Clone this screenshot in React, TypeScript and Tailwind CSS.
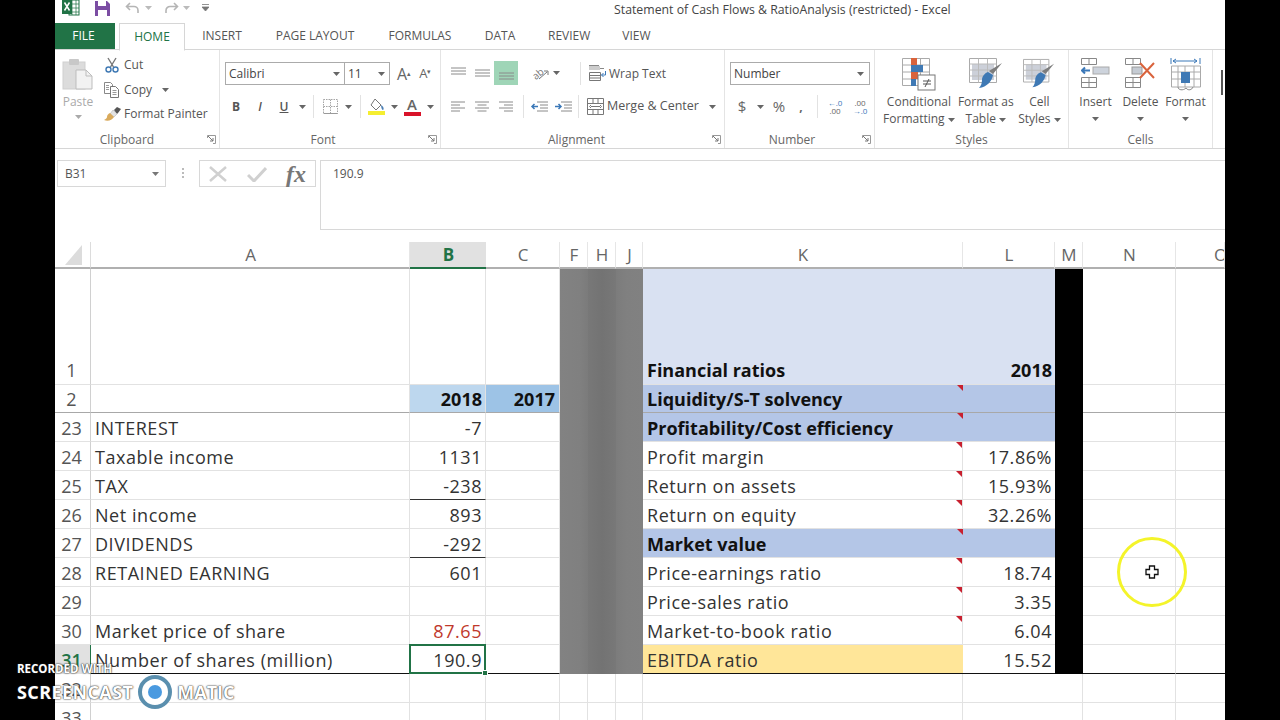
import React from "react";

const Caret = ({ c = "#666", className = "" }: { c?: string; className?: string }) => (
  <svg width="7" height="4" viewBox="0 0 7 4" className={className}><path d="M0 0h7L3.5 4z" fill={c} /></svg>
);

const Launcher = () => (
  <svg width="9" height="9" viewBox="0 0 9 9"><path d="M.5 3V.5H8.5V8.500H6" fill="none" stroke="#999" /><path d="M1 1l5 5M3 6h3V3" fill="none" stroke="#777" /></svg>
);

const Group = ({ w, label, launcher, labelCls = "", children }: { w: string; label: string; launcher?: boolean; labelCls?: string; children: React.ReactNode }) => (
  <div className={`${w} flex h-full shrink-0 flex-col border-r border-[#e4e4e4]`}>
    <div className="h-[81px] overflow-hidden">{children}</div>
    <div className="flex h-[17px] items-center">
      <span className={`flex-1 text-center text-[12px] text-[#666] ${labelCls}`}>{label}</span>
      {launcher && <span className="mr-[3px] flex"><Launcher /></span>}
    </div>
  </div>
);

const Slot = ({ w = "w-[24px]", children, className = "" }: { w?: string; children?: React.ReactNode; className?: string }) => (
  <span className={`${w} flex shrink-0 items-center justify-center ${className}`}>{children}</span>
);

const Sep = ({ ml = "" }: { ml?: string }) => <span className={`h-[23px] w-px shrink-0 bg-[#e2e2e2] ${ml}`} />;

const AlignV = ({ y }: { y: number }) => (
  <svg width="15" height="15" viewBox="0 0 15 15"><path d={`M0 ${y}h15M0 ${y + 3}h15M0 ${y + 6}h15`} stroke="#8a8a8a" strokeWidth="1" fill="none" /></svg>
);

const AlignH = ({ k }: { k: "l" | "c" | "r" }) => {
  const s = k === "l" ? ["M1 2h14", "M1 5h9", "M1 8h14", "M1 11h9"] : k === "c" ? ["M1 2h14", "M3.500 5h9", "M1 8h14", "M3.500 11h9"] : ["M1 2h14", "M6 5h9", "M1 8h14", "M6 11h9"];
  return <svg width="16" height="13" viewBox="0 0 16 13"><path d={s.join("")} stroke="#8a8a8a" fill="none" /></svg>;
};

const Indent = ({ flip }: { flip?: boolean }) => (
  <svg width="18" height="13" viewBox="0 0 18 13">
    <path d="M7 2h11M10 5h8M10 8h8M7 11h11" stroke="#8a8a8a" fill="none" />
    {flip ? <path d="M1 6.500h6M4.500 4l2.500 2.500L4.500 9" stroke="#3b78b8" strokeWidth="1.500" fill="none" /> : <path d="M8 6.500H2M4.500 4L2 6.500 4.500 9" stroke="#3b78b8" strokeWidth="1.500" fill="none" />}
  </svg>
);

const PasteIcon = () => (
  <svg width="32" height="32" viewBox="0 0 32 32">
    <rect x="1" y="4" width="22" height="27" fill="#dcdcdc" stroke="#cfcfcf" />
    <rect x="7" y="1" width="10" height="6" rx="1" fill="#c8c8c8" />
    <path d="M14 12h10l6 6v13H14z" fill="#f2f2f2" stroke="#bdbdbd" />
    <path d="M24 12v6h6" fill="none" stroke="#bdbdbd" />
  </svg>
);

const CutIcon = () => (
  <svg width="16" height="16" viewBox="0 0 16 16">
    <path d="M4 1l5.500 9M12 1L6.500 10" stroke="#777" strokeWidth="1.400" fill="none" />
    <circle cx="4.500" cy="12.500" r="2.500" fill="none" stroke="#3f79b4" strokeWidth="1.400" />
    <circle cx="11.500" cy="12.500" r="2.500" fill="none" stroke="#3f79b4" strokeWidth="1.400" />
  </svg>
);

const CopyIcon = () => (
  <svg width="16" height="16" viewBox="0 0 16 16">
    <path d="M.5.500h6l2 2v9h-8z" fill="#fff" stroke="#888" />
    <path d="M6.500 4.500h5l3 3v8h-8z" fill="#fff" stroke="#777" />
    <path d="M8.500 8.500h4M8.500 10.500h4M8.500 12.500h4M2 3.500h3M2 5.500h3M2 7.500h3" stroke="#999" fill="none" />
  </svg>
);

const BrushIcon = () => (
  <svg width="17" height="15" viewBox="0 0 17 15">
    <path d="M10 3l3-3 4 2-3 4-1 1z" fill="#555" />
    <path d="M9 3l4 4-3 3-4-3z" fill="#e3e3e3" stroke="#aaa" strokeWidth=".5" />
    <path d="M6 6l4 4c-2 3-6 5-10 3 2-1 3-2 3-3 0-2 1-3 3-4z" fill="#d9aa5c" />
  </svg>
);

const BorderIcon = () => (
  <svg width="15" height="15" viewBox="0 0 15 15">
    <path d="M.5.500h14v14H.500zM7.500.500v14M.500 7.500h14" fill="none" stroke="#a5a5a5" strokeDasharray="1.500 1" />
    <path d="M.5 14.500h14" stroke="#9a9a9a" />
  </svg>
);

const FillIcon = () => (
  <svg width="18" height="18" viewBox="0 0 18 18">
    <path d="M7 1l6 6-5 5-5-5z" fill="#fff" stroke="#777" />
    <path d="M13 7c2 1 3 3 2.500 4.500S13 11 13 7z" fill="#4b7fb5" />
    <rect x="0" y="13" width="17" height="4" fill="#f5ee30" />
  </svg>
);

const ColorA = () => (
  <span className="flex flex-col items-center leading-none">
    <span className="text-[15px] font-semibold leading-[14px] text-[#666]">A</span>
    <span className="mt-[1px] h-[4px] w-[17px] bg-[#d9132a]" />
  </span>
);

const OrientIcon = () => (
  <svg width="18" height="15" viewBox="0 0 18 15">
    <text x="1" y="12" fontSize="10" fill="#777" transform="rotate(-40 6 8)" fontFamily="Open Sans">ab</text>
    <path d="M8 13l8-7" stroke="#777" fill="none" />
    <path d="M13 5h4v4" stroke="#777" fill="none" />
  </svg>
);

const WrapIcon = () => (
  <svg width="19" height="17" viewBox="0 0 19 17">
    <path d="M1 .500h10M1 3.500h15" stroke="#888" fill="none" />
    <rect x="1" y="1" width="11" height="4" fill="#ccc" />
    <path d="M1.500 7.500h11v8h-11zM1.500 10.500h11M1.500 13h11" stroke="#777" fill="none" />
    <path d="M17.500 6v4h-4M15.500 8l-2 2 2 2" stroke="#3b78b8" fill="none" />
  </svg>
);

const MergeIcon = () => (
  <svg width="17" height="17" viewBox="0 0 17 17">
    <path d="M.5.500h16v16H.500zM.500 5.500h16M.500 11.500h16M6 .500v5M11 .500v5M6 11.500v5M11 11.500v5" fill="none" stroke="#777" />
    <path d="M4 8.500h9M4 7l-1.500 1.500L4 10M13 7l1.500 1.500L13 10" fill="none" stroke="#777" />
  </svg>
);

const CondIcon = () => (
  <svg width="34" height="33" viewBox="0 0 34 33">
    <path d="M.5.500h27v27H.500zM9.500.500v27M18.500.500v27M.500 7h27M.500 14h27M.500 21h27" fill="none" stroke="#aaa" />
    <rect x="9" y="0" width="6" height="7" fill="#d9633c" />
    <rect x="9" y="7" width="12" height="7" fill="#3f79b4" />
    <rect x="9" y="14" width="7" height="7" fill="#d9633c" />
    <rect x="9" y="21" width="5" height="7" fill="#3f79b4" />
    <rect x="16" y="17" width="17" height="15" fill="#fff" stroke="#777" />
    <path d="M21 23h8M21 26h8M27 21l-4 8" stroke="#555" fill="none" />
  </svg>
);

const TableBrush = ({ w }: { w: number }) => (
  <svg width={w} height="33" viewBox="0 0 34 33">
    <path d="M.5.500h27v24H.500z" fill="#fff" stroke="#aaa" />
    <rect x="3" y="6" width="22" height="16" fill="#ccd0d9" />
    <path d="M.5 6h27M9.500.500v24M18.500.500v24M.500 12h27M.500 18h27" stroke="#bbb" fill="none" />
    <path d="M33 5l-9 11-4-3z" fill="#7d7d7d" />
    <path d="M19 14l5 3c-1 6-6 12-14 13 2-2 3-5 3-8 0-4 3-7 6-8z" fill="#3f79b4" />
  </svg>
);

const InsertIcon = () => (
  <svg width="29" height="30" viewBox="0 0 29 30">
    <path d="M.5.500h15v6H.500zM8 .500v6M.500 19.500h15v10H.500zM.500 24.500h15M8 19.500v10" fill="none" stroke="#888" />
    <rect x="12" y="9" width="16" height="7" fill="#cdd3dc" stroke="#aaa" />
    <path d="M9 12.500H1M4 9.500l-3 3 3 3" fill="none" stroke="#3b78b8" strokeWidth="2" />
  </svg>
);

const DeleteIcon = () => (
  <svg width="32" height="30" viewBox="0 0 32 30">
    <path d="M.5.500h15v6H.500zM8 .500v6M.500 19.500h15v10H.500zM.500 24.500h15M8 19.500v10" fill="none" stroke="#888" />
    <rect x="7" y="9" width="10" height="7" fill="#c5cbd3" stroke="#999" />
    <path d="M15 5l14 15M29 5L15 20" stroke="#d9633c" strokeWidth="2" fill="none" />
  </svg>
);

const FormatIcon = () => (
  <svg width="32" height="34" viewBox="0 0 32 34">
    <path d="M3 3h24M3 3l3-2M3 3l3 2M27 3l-3-2M27 3l-3 2M1 0v6M30 0v6" stroke="#3b78b8" fill="none" />
    <path d="M1.500 8h29v21h-29zM8 8v21M24 8v21M1.500 14h29M1.500 21h29M15 8v21" stroke="#aaa" fill="none" />
    <rect x="11" y="14" width="9" height="11" fill="#3f79b4" />
    <path d="M8 29c0 3 5 4 8 1M16 30c2 3 6 2 7-1" stroke="#888" fill="none" />
  </svg>
);

const Ribbon = () => (
  <div className="flex h-[99px] border-b border-[#d6d6d6] bg-white text-[12px] text-[#555]">
    <Group w="w-[165px]" label="Clipboard" launcher labelCls="pr-[8px]">
      <div className="flex h-full">
        <div className="ml-[8px] flex w-[30px] flex-col items-center pt-[8px] text-[#aaa]">
          <PasteIcon />
          <span className="mt-[4px] leading-[16px]">Paste</span>
          <Caret c="#aaa" className="mt-[5px]" />
        </div>
        <div className="ml-[11px] flex flex-col">
          <div className="mt-[7px] flex h-[16px] items-center"><span className="flex w-[19px]"><CutIcon /></span><span className="ml-[1px]">Cut</span></div>
          <div className="mt-[9px] flex h-[16px] items-center"><span className="flex w-[19px]"><CopyIcon /></span><span className="ml-[1px]">Copy</span><Caret className="ml-[10px]" /></div>
          <div className="mt-[8px] flex h-[16px] items-center"><span className="flex w-[19px]"><BrushIcon /></span><span className="ml-[1px]">Format Painter</span></div>
        </div>
      </div>
    </Group>
    <Group w="w-[221px]" label="Font" launcher labelCls="pr-[2px]">
      <div className="pt-[12px]">
        <div className="flex h-[23px] items-center pl-[5px]">
          <div className="flex h-[23px] w-[120px] items-center justify-between border border-[#ababab] pl-[3px] pr-[4px] text-[#444]">Calibri<Caret /></div>
          <div className="-ml-px flex h-[23px] w-[46px] items-center justify-between border border-[#ababab] pl-[3px] pr-[4px] text-[#444]">11<Caret /></div>
          <span className="ml-[7px] text-[16px] text-[#666]">A<sup className="text-[7px]">▴</sup></span>
          <span className="ml-[8px] text-[13px] text-[#666]">A<sup className="text-[7px]">▾</sup></span>
        </div>
        <div className="mt-[10px] flex h-[23px] items-center pl-[4px] text-[#555]">
          <Slot className="font-bold">B</Slot>
          <Slot className="italic font-semibold">I</Slot>
          <Slot><span className="font-semibold underline">U</span></Slot>
          <Slot w="w-[12px]"><Caret /></Slot>
          <Slot w="w-[10px]"><Sep /></Slot>
          <Slot><BorderIcon /></Slot>
          <Slot w="w-[12px]"><Caret /></Slot>
          <Slot w="w-[12px]"><Sep /></Slot>
          <Slot w="w-[22px]"><FillIcon /></Slot>
          <Slot w="w-[12px]"><Caret /></Slot>
          <Slot w="w-[24px]"><ColorA /></Slot>
          <Slot w="w-[12px]"><Caret /></Slot>
        </div>
      </div>
    </Group>
    <Group w="w-[284px]" label="Alignment" launcher>
      <div className="pt-[11px]">
        <div className="flex h-[24px] items-center pl-[5px]">
          <Slot><AlignV y={2} /></Slot>
          <Slot><AlignV y={4} /></Slot>
          <Slot className="h-[24px] bg-[#9fd5b7]"><AlignV y={7} /></Slot>
          <Slot className="ml-[10px]"><OrientIcon /></Slot>
          <Caret className="ml-[1px]" />
          <Sep ml="ml-[20px]" />
          <Slot className="ml-[4px]"><WrapIcon /></Slot>
          <span className="mt-[1px]">Wrap Text</span>
        </div>
        <div className="mt-[10px] flex h-[23px] items-center pl-[5px]">
          <Slot><AlignH k="l" /></Slot>
          <Slot><AlignH k="c" /></Slot>
          <Slot><AlignH k="r" /></Slot>
          <Sep ml="ml-[5px]" />
          <Slot className="ml-[3px]"><Indent /></Slot>
          <Slot><Indent flip /></Slot>
          <Sep ml="ml-[3px]" />
          <Slot className="ml-[4px]"><MergeIcon /></Slot>
          <span className="text-[12.500px]">Merge &amp; Center</span>
          <Caret className="ml-[10px]" />
        </div>
      </div>
    </Group>
    <Group w="w-[150px]" label="Number" launcher labelCls="pr-[3px]">
      <div className="pt-[12px]">
        <div className="ml-[5px] flex h-[23px] w-[140px] items-center justify-between border border-[#ababab] pl-[3px] pr-[5px] text-[#444]">Number<Caret /></div>
        <div className="mt-[10px] flex h-[23px] items-center pl-[5px] text-[#666]">
          <Slot className="text-[15px]">$</Slot>
          <Slot w="w-[12px]"><Caret /></Slot>
          <Slot className="ml-[1px] text-[15px]">%</Slot>
          <Slot w="w-[20px]" className="font-bold">,</Slot>
          <Slot w="w-[12px]"><Sep /></Slot>
          <Slot w="w-[24px]" className="flex-col text-[8px] leading-[8px]"><span className="text-[#3b78b8]">←.0</span><span>.00</span></Slot>
          <Slot w="w-[24px]" className="ml-[1px] flex-col text-[8px] leading-[8px]"><span>.00</span><span className="text-[#3b78b8]">→.0</span></Slot>
        </div>
      </div>
    </Group>
    <Group w="w-[194px]" label="Styles">
      <div className="flex pt-[8px] text-center leading-[17px]">
        <div className="flex w-[87px] flex-col items-center pl-[2px]"><CondIcon /><span className="mt-[2px]">Conditional</span><span className="whitespace-nowrap">Formatting <Caret className="inline align-middle" /></span></div>
        <div className="flex w-[50px] flex-col items-center"><TableBrush w={34} /><span className="mt-[2px] whitespace-nowrap">Format as</span><span className="whitespace-nowrap">Table <Caret className="inline align-middle" /></span></div>
        <div className="flex w-[58px] flex-col items-center"><TableBrush w={32} /><span className="mt-[2px]">Cell</span><span className="whitespace-nowrap">Styles <Caret className="inline align-middle" /></span></div>
      </div>
    </Group>
    <Group w="w-[144px]" label="Cells">
      <div className="flex pl-[4px] pt-[8px] text-center leading-[17px]">
        {[["Insert", <InsertIcon />], ["Delete", <DeleteIcon />], ["Format", <FormatIcon />]].map(([t, i], n) => (
          <div key={n} className="flex h-[70px] w-[45px] flex-col items-center">
            <span className="flex h-[34px]">{i}</span>
            <span className="mt-[1px]">{t}</span>
            <Caret className="mt-[7px]" />
          </div>
        ))}
      </div>
    </Group>
    <div className="flex-1 pl-[8px] pt-[20px]"><span className="block h-[25px] w-[2px] bg-[#555]" /></div>
  </div>
);

const COLS = "grid grid-cols-[36px_319px_76px_74px_28px_28px_27px_320px_92px_28px_93px_1fr] grid-rows-[minmax(0,1fr)]";
const GL = "border-r border-b border-[#e2e2e2]";
const GRAY = ["bg-[linear-gradient(90deg,#828282,#808080_70%,#7b7b7b)]", "bg-[linear-gradient(90deg,#787878,#737373_50%,#787878)]", "bg-[linear-gradient(90deg,#7c7c7c,#808080_40%,#818181)]"];

type R = {
  n: string; a?: string; b?: string; c?: string; k?: string; l?: string; h?: string; kb?: boolean;
  kbg?: string; lbg?: string; bCls?: string; cCls?: string; tri?: boolean; sel?: boolean; last?: boolean; band?: boolean; freeze?: boolean; lh?: string;
};

const Row = ({ n, a, b, c, k, l, h = "h-[29px]", kb, kbg = "", lbg, bCls = "", cCls = "", tri, sel, last, band = true, freeze, lh = "leading-[26px]" }: R) => {
  const bot = last ? "border-b-[#111]" : freeze ? "border-b-[#a8a8a8]" : "border-b-[#e2e2e2]";
  const reg = "tracking-[0.55px]";
  return (
    <div className={`${COLS} ${h} text-[18px] ${lh} text-[#333]`}>
      <div className={`flex items-end justify-center border-r border-b pr-[2px] ${sel ? "border-r-[#217346] bg-[#e1e1e1] text-[#217346] font-semibold" : "border-r-[#d0d0d0] text-[#555]"} ${freeze ? "border-b-[#a8a8a8]" : "border-b-[#e2e2e2]"}`}>{n}</div>
      <div className={`${GL} ${bot} ${reg} flex items-end overflow-visible whitespace-nowrap pl-[4px]`}>{a}</div>
      <div className={`${GL} ${bot} ${reg} relative flex items-end justify-end pr-[3px] ${bCls}`}>
        {b}
        {sel && <span className="absolute -bottom-px -left-px -right-px -top-px z-10 border-2 border-[#217346]" />}
        {sel && <span className="absolute -bottom-[3px] -right-[3px] z-20 h-[6px] w-[6px] border border-white bg-[#217346]" />}
      </div>
      <div className={`${GL} ${bot} flex items-end justify-end pr-[4px] ${cCls}`}>{c}</div>
      {GRAY.map((g, i) => <div key={i} className={band ? g : `${GL} border-b-[#e2e2e2]`} />)}
      <div className={`relative border-b ${bot} ${kbg ? "" : "border-r border-r-[#e2e2e2]"} ${kb ? "font-bold text-[#111]" : reg} ${kbg} flex items-end pl-[4px]`}>
        {k}
        {tri && <svg width="6" height="6" viewBox="0 0 6 6" className="absolute right-0 top-0"><path d="M0 0h6v6z" fill="#c8202f" /></svg>}
      </div>
      <div className={`border-b ${bot} ${lbg ?? ""} flex items-end justify-end pr-[3px] ${kb ? "font-bold text-[#111]" : reg}`}>{l}</div>
      <div className={band ? "bg-black" : `${GL} border-b-[#e2e2e2]`} />
      <div className={`${GL} ${bot}`} />
      <div className={`border-b ${bot}`} />
    </div>
  );
};

const Head = ({ t, sel, cls = "" }: { t: string; sel?: boolean; cls?: string }) => (
  <div className={`flex items-center justify-center overflow-hidden border-b-2 pl-[1px] text-[17px] ${sel ? "border-b-[#217346] bg-[#e1e1e1] font-bold text-[#217346]" : "border-r border-r-[#e6e6e6] border-b-[#b0b0b0] text-[#666]"} ${cls}`}>{t}</div>
);

const Sheet = () => (
  <div className="overflow-hidden bg-white">
    <div className={`${COLS} h-[27px]`}>
      <div className="flex items-center justify-center border-r border-b-2 border-r-[#dcdcdc] border-b-[#b0b0b0]">
        <svg width="17" height="20" viewBox="0 0 17 20" className="ml-[2px]"><path d="M17 0v20H0z" fill="#dcdcdc" /></svg>
      </div>
      {["A", "B", "C", "F", "H", "J", "K", "L", "M", "N"].map((t) => <Head key={t} t={t} sel={t === "B"} />)}
      <Head t="O" cls="justify-start !pl-[38px]" />
    </div>
    <Row n="1" h="h-[116px]" lh="leading-[28px]" k="Financial ratios" l="2018" kb kbg="bg-[#d9e1f2]" lbg="bg-[#d9e1f2] border-b-[#d9e1f2]" />
    <Row n="2" h="h-[28px]" b="2018" c="2017" bCls="bg-[#bdd7ee] font-bold text-[#111] !tracking-normal" cCls="bg-[#9dc3e6] font-bold text-[#111]" k="Liquidity/S-T solvency" kb kbg="bg-[#b4c6e7]" lbg="bg-[#b4c6e7]" tri freeze />
    <Row n="23" a="INTEREST" b="-7" k="Profitability/Cost efficiency" kb kbg="bg-[#b4c6e7]" lbg="bg-[#b4c6e7]" tri />
    <Row n="24" a="Taxable income" b="1131" k="Profit margin" l="17.86%" tri />
    <Row n="25" a="TAX" b="-238" k="Return on assets" l="15.93%" tri bCls="!border-b-[#333]" />
    <Row n="26" a="Net income" b="893" k="Return on equity" l="32.26%" tri />
    <Row n="27" a="DIVIDENDS" b="-292" k="Market value" kb kbg="bg-[#b4c6e7]" lbg="bg-[#b4c6e7]" tri bCls="!border-b-[#333]" />
    <Row n="28" a="RETAINED EARNING" b="601" k="Price-earnings ratio" l="18.74" tri />
    <Row n="29" k="Price-sales ratio" l="3.35" tri />
    <Row n="30" a="Market price of share" b="87.65" bCls="text-[#c0392b]" k="Market-to-book ratio" l="6.04" tri />
    <Row n="31" a="Number of shares (million)" b="190.9" k="EBITDA ratio" l="15.52" kbg="bg-[#ffe699]" sel last />
    <Row n="32" band={false} />
    <Row n="33" band={false} />
  </div>
);

export default function App() {
  return (
    <div className="relative h-[720px] w-[1280px] overflow-hidden bg-black" style={{ fontFamily: '"Open Sans", "Noto Sans", sans-serif' }}>
      <div className="ml-[55px] h-[720px] w-[1170px] overflow-hidden bg-white">
        <div className="flex h-[22px] items-center">
          <svg width="18" height="18" viewBox="0 0 18 18" className="ml-[7px] -mt-[6px]"><rect x="7" y="1" width="10" height="15" fill="#fff" stroke="#217346" /><path d="M10 1v15M14 1v15M7 5h10M7 9h10M7 13h10" stroke="#217346" strokeWidth=".7" /><rect x="0" y="0" width="10" height="15" fill="#217346" /><path d="M2.500 3.500l5 8M7.500 3.500l-5 8" stroke="#fff" strokeWidth="1.500" /></svg>
          <svg width="15" height="15" viewBox="0 0 15 15" className="ml-[15px] -mt-[6px]"><path d="M0 0h12l3 3v12H0z" fill="#7b4da3" /><rect x="3" y="0" width="8" height="5" fill="#fff" /><rect x="3" y="9" width="9" height="6" fill="#fff" /></svg>
          <svg width="16" height="13" viewBox="0 0 16 13" className="ml-[15px] -mt-[6px]"><path d="M5 1L1.500 4.500 5 8M2 4.500h7a4 4 0 014 4V11" fill="none" stroke="#b5b5b5" strokeWidth="1.600" /></svg>
          <Caret c="#bbb" className="ml-[4px] -mt-[6px]" />
          <svg width="16" height="13" viewBox="0 0 16 13" className="ml-[11px] -mt-[6px]"><path d="M11 1l3.500 3.500L11 8M14 4.500H7a4 4 0 00-4 4V11" fill="none" stroke="#b5b5b5" strokeWidth="1.600" /></svg>
          <Caret c="#bbb" className="ml-[4px] -mt-[6px]" />
          <svg width="7" height="8" viewBox="0 0 7 8" className="ml-[12px] -mt-[6px]"><path d="M0 .500h7M0 3h7l-3.500 4z" stroke="#777" strokeWidth=".8" fill="#777" /></svg>
          <span className="ml-[405px] -mt-[2px] whitespace-nowrap text-[12.300px] text-[#444]">Statement of Cash Flows &amp; RatioAnalysis (restricted) - Excel</span>
        </div>
        <div className="flex h-[28px] items-center border-b border-[#d6d6d6] pt-[1px] text-[12px] text-[#555]">
          <span className="flex h-[26px] w-[60px] items-center justify-center bg-[#217346] pr-[3px] text-white">FILE</span>
          <span className="-mb-px ml-[4px] flex h-[28px] w-[66px] items-center justify-center border border-b-white border-[#d6d6d6] bg-white text-[#217346]">HOME</span>
          <span className="ml-[17px] w-[40px] text-center">INSERT</span>
          <span className="ml-[32px] w-[82px] text-center">PAGE LAYOUT</span>
          <span className="ml-[31px] w-[66px] text-center">FORMULAS</span>
          <span className="ml-[31px] w-[32px] text-center">DATA</span>
          <span className="ml-[32px] w-[42px] text-center">REVIEW</span>
          <span className="ml-[32px] w-[29px] text-center">VIEW</span>
        </div>
        <Ribbon />
        <div className="flex h-[93px] items-start pt-[11px] text-[12px] text-[#555]">
          <div className="ml-[2px] flex h-[27px] w-[109px] items-center justify-between border border-[#d8d8d8] pl-[7px] pr-[6px]">B31<Caret c="#777" /></div>
          <span className="ml-[16px] mt-[8px] flex flex-col gap-[2px]"><i className="h-[2px] w-[2px] bg-[#bbb]" /><i className="h-[2px] w-[2px] bg-[#bbb]" /><i className="h-[2px] w-[2px] bg-[#bbb]" /></span>
          <div className="ml-[15px] flex h-[27px] w-[117px] items-center border border-[#d8d8d8]">
            <svg width="18" height="16" viewBox="0 0 18 16" className="ml-[9px]"><path d="M1 1l16 14M17 1L1 15" stroke="#d0d0d0" strokeWidth="2.500" /></svg>
            <svg width="20" height="16" viewBox="0 0 20 16" className="ml-[20px]"><path d="M1 9l6 6L19 2" stroke="#d0d0d0" strokeWidth="3" fill="none" /></svg>
            <span className="ml-[19px] text-[24px] font-semibold italic leading-none text-[#777]" style={{ fontFamily: '"Liberation Serif", serif' }}>fx</span>
          </div>
          <div className="ml-[4px] h-[70px] flex-1 border-b border-l border-t border-[#d8d8d8] pl-[12px] pt-[4px] text-[12px]">190.9</div>
        </div>
        <Sheet />
      </div>

      <div className="absolute left-[17px] top-[662px] whitespace-nowrap text-[11.500px] font-bold leading-[14px] text-white [text-shadow:0_0_2px_#222,0_0_1px_#222]">RECORDED WITH</div>
      <div className="absolute left-[17px] top-[675px] flex items-center whitespace-nowrap text-[18px] font-bold leading-[24px] text-white [text-shadow:0_0_2px_#222,0_0_1px_#222]">
        <span className="tracking-[0.4px]">SCREENCAST</span>
        <span className="ml-[5px] flex h-[34px] w-[34px] items-center justify-center rounded-full border-[4px] border-[#5a8fae] bg-white"><span className="h-[14px] w-[14px] rounded-full bg-[#4a9ae0]" /></span>
        <span className="ml-[5px]">MATIC</span>
      </div>

      <span className="absolute left-[1117px] top-[537px] flex h-[70px] w-[70px] items-center justify-center rounded-full border-[3px] border-[#f4f42a]">
        <svg width="14" height="14" viewBox="0 0 14 14"><path d="M4.500 1h5v3.500H13v5H9.500V13h-5V9.500H1v-5h3.500z" fill="#fff" stroke="#111" strokeWidth="1.300" /></svg>
      </span>
    </div>
  );
}
